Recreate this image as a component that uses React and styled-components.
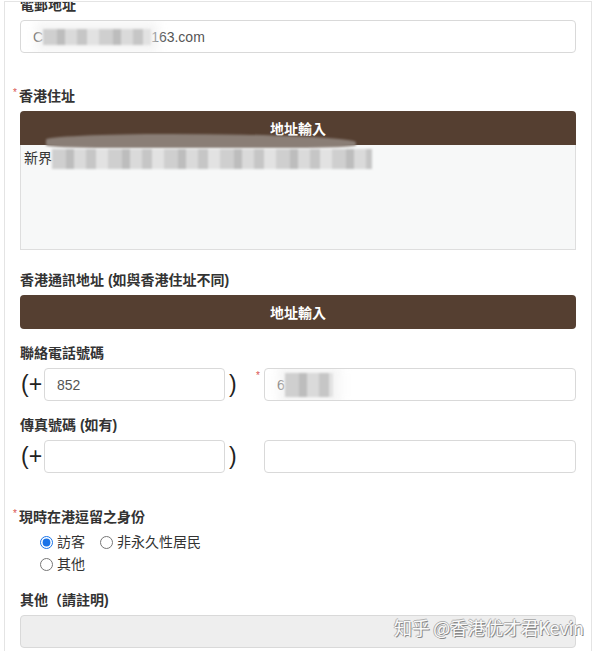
import React from "react";
import styled, { createGlobalStyle } from "styled-components";

const Global = createGlobalStyle`
  html, body {
    margin: 0;
    padding: 0;
    background: #fff;
  }
  body {
    font-family: "Liberation Sans", "Noto Sans CJK TC", Arial, sans-serif;
    font-size: 14px;
    color: #333;
  }
  #root {
    height: 651px;
    overflow: hidden;
  }
`;

const Page = styled.div`
  position: relative;
  height: 651px;
  overflow: hidden;
`;

const Panel = styled.div`
  margin: 1px 8px 0 4px;
  height: 660px;
  border: 1px solid #e4e4e4;
  border-bottom: none;
  padding: 0 15px;
  overflow: hidden;
`;

const Group = styled.div`
  margin-top: ${(p) => p.$top || 0}px;
`;

const Label = styled.div`
  font-weight: bold;
  font-size: 14px;
  line-height: 20px;
  height: 20px;
  margin-bottom: 5px;
  color: #333;
  white-space: nowrap;
  position: relative;
`;

const Star = styled.span`
  color: #d9534f;
  font-size: 10px;
  font-weight: normal;
  vertical-align: top;
  line-height: 14px;
  margin-left: -7px;
  margin-right: 2px;
`;

const Field = styled.div`
  box-sizing: border-box;
  height: 33px;
  border: 1px solid #d9d9d9;
  border-radius: 4px;
  background: ${(p) => (p.$disabled ? "#eeeeee" : "#fff")};
  padding: 0 12px;
  display: flex;
  align-items: center;
  color: #555;
  font-size: 14px;
  white-space: nowrap;
  overflow: hidden;
  flex: ${(p) => (p.$grow ? 1 : "none")};
  width: ${(p) => (p.$w ? `${p.$w}px` : "auto")};
`;

const BrownButton = styled.div`
  box-sizing: border-box;
  height: 34px;
  background: #553f31;
  border-radius: 4px 4px ${(p) => (p.$attached ? "0 0" : "4px 4px")};
  color: #fff;
  font-weight: bold;
  font-size: 14px;
  display: flex;
  align-items: center;
  justify-content: center;
`;

const AddressBox = styled.div`
  position: relative;
  box-sizing: border-box;
  height: 105px;
  background: #f7f8f8;
  border: 1px solid #dedede;
  border-top: none;
  padding: 4px 3px;
  color: #333;
  font-size: 14px;
  line-height: 18px;
  white-space: nowrap;
`;

const Mosaic = styled.span`
  display: inline-block;
  vertical-align: middle;
  width: ${(p) => p.$w}px;
  height: ${(p) => p.$h || 18}px;
  background: repeating-linear-gradient(
    90deg,
    #cfcfcf 0 14px,
    #bdbdbd 14px 22px,
    #dadada 22px 34px,
    #c6c6c6 34px 44px,
    #e2e2e2 44px 56px
  );
  filter: blur(1px);
  box-shadow: ${(p) =>
    p.$glow ? "0 0 10px 7px rgba(240, 240, 240, 0.7)" : "none"};
`;

const Smudge = styled.div`
  position: absolute;
  left: 25px;
  top: -11px;
  width: 310px;
  height: 14px;
  background: #8a7e76;
  border-radius: 40% 60% 20% 20%;
  filter: blur(1px);
`;

const PhoneRow = styled.div`
  display: flex;
  align-items: center;
  height: 33px;
`;

const Paren = styled.span`
  font-size: 23px;
  line-height: 33px;
  color: #222;
  width: ${(p) => p.$w}px;
  flex: none;
  padding-left: ${(p) => p.$pl || 0}px;
  box-sizing: border-box;
`;

const RowStar = styled.span`
  color: #d9534f;
  font-size: 10px;
  width: 8px;
  align-self: flex-start;
  margin-top: 2px;
  flex: none;
`;

const Radios = styled.div`
  padding-left: 19px;
  margin-top: 6px;
  display: flex;
  flex-wrap: wrap;
  width: 220px;
  row-gap: 3px;
`;

const RadioLabel = styled.label`
  display: flex;
  align-items: center;
  font-size: 14px;
  line-height: 19px;
  color: #333;
  margin-right: 14px;
  input {
    margin: 0 4px 0 1px;
    width: 13px;
    height: 13px;
    accent-color: #1a73e8;
  }
`;

const Watermark = styled.div`
  position: absolute;
  left: 394px;
  top: 615px;
  font-size: 18px;
  line-height: 24px;
  color: #fafafa;
  font-family: "Noto Sans CJK SC", "Liberation Sans", sans-serif;
  text-shadow: 1px 1px 0 #8a8a8a, -1px 0 0 #b0b0b0, 0 -1px 0 #b0b0b0;
  letter-spacing: -0.3px;
`;

export default function App() {
  return (
    <Page>
      <Global />
      <Panel>
        <Group $top={-7}>
          <Label>電郵地址</Label>
          <Field>
            C<Mosaic $w={108} $h={16} $glow />
            163.com
          </Field>
        </Group>

        <Group $top={33}>
          <Label>
            <Star>*</Star>香港住址
          </Label>
          <BrownButton $attached>地址輸入</BrownButton>
          <AddressBox>
            <Smudge />
            新界<Mosaic $w={320} $h={20} />
          </AddressBox>
        </Group>

        <Group $top={20}>
          <Label>香港通訊地址 (如與香港住址不同)</Label>
          <BrownButton>地址輸入</BrownButton>
        </Group>

        <Group $top={14}>
          <Label>聯絡電話號碼</Label>
          <PhoneRow>
            <Paren $w={24} $pl={1}>(+</Paren>
            <Field $w={181}>852</Field>
            <Paren $w={31} $pl={4}>)</Paren>
            <RowStar>*</RowStar>
            <Field $grow>
              6<Mosaic $w={48} $h={24} $glow />
            </Field>
          </PhoneRow>
        </Group>

        <Group $top={14}>
          <Label>傳真號碼 (如有)</Label>
          <PhoneRow>
            <Paren $w={24} $pl={1}>(+</Paren>
            <Field $w={181} />
            <Paren $w={39} $pl={4}>)</Paren>
            <Field $grow />
          </PhoneRow>
        </Group>

        <Group $top={34}>
          <Label>
            <Star>*</Star>現時在港逗留之身份
          </Label>
          <Radios>
            <RadioLabel>
              <input type="radio" name="status" defaultChecked />
              訪客
            </RadioLabel>
            <RadioLabel>
              <input type="radio" name="status" />
              非永久性居民
            </RadioLabel>
            <RadioLabel>
              <input type="radio" name="status" />
              其他
            </RadioLabel>
          </Radios>
        </Group>

        <Group $top={16}>
          <Label>其他（請註明)</Label>
          <Field $disabled />
        </Group>
      </Panel>
      <Watermark>知乎 @香港优才君Kevin</Watermark>
    </Page>
  );
}
